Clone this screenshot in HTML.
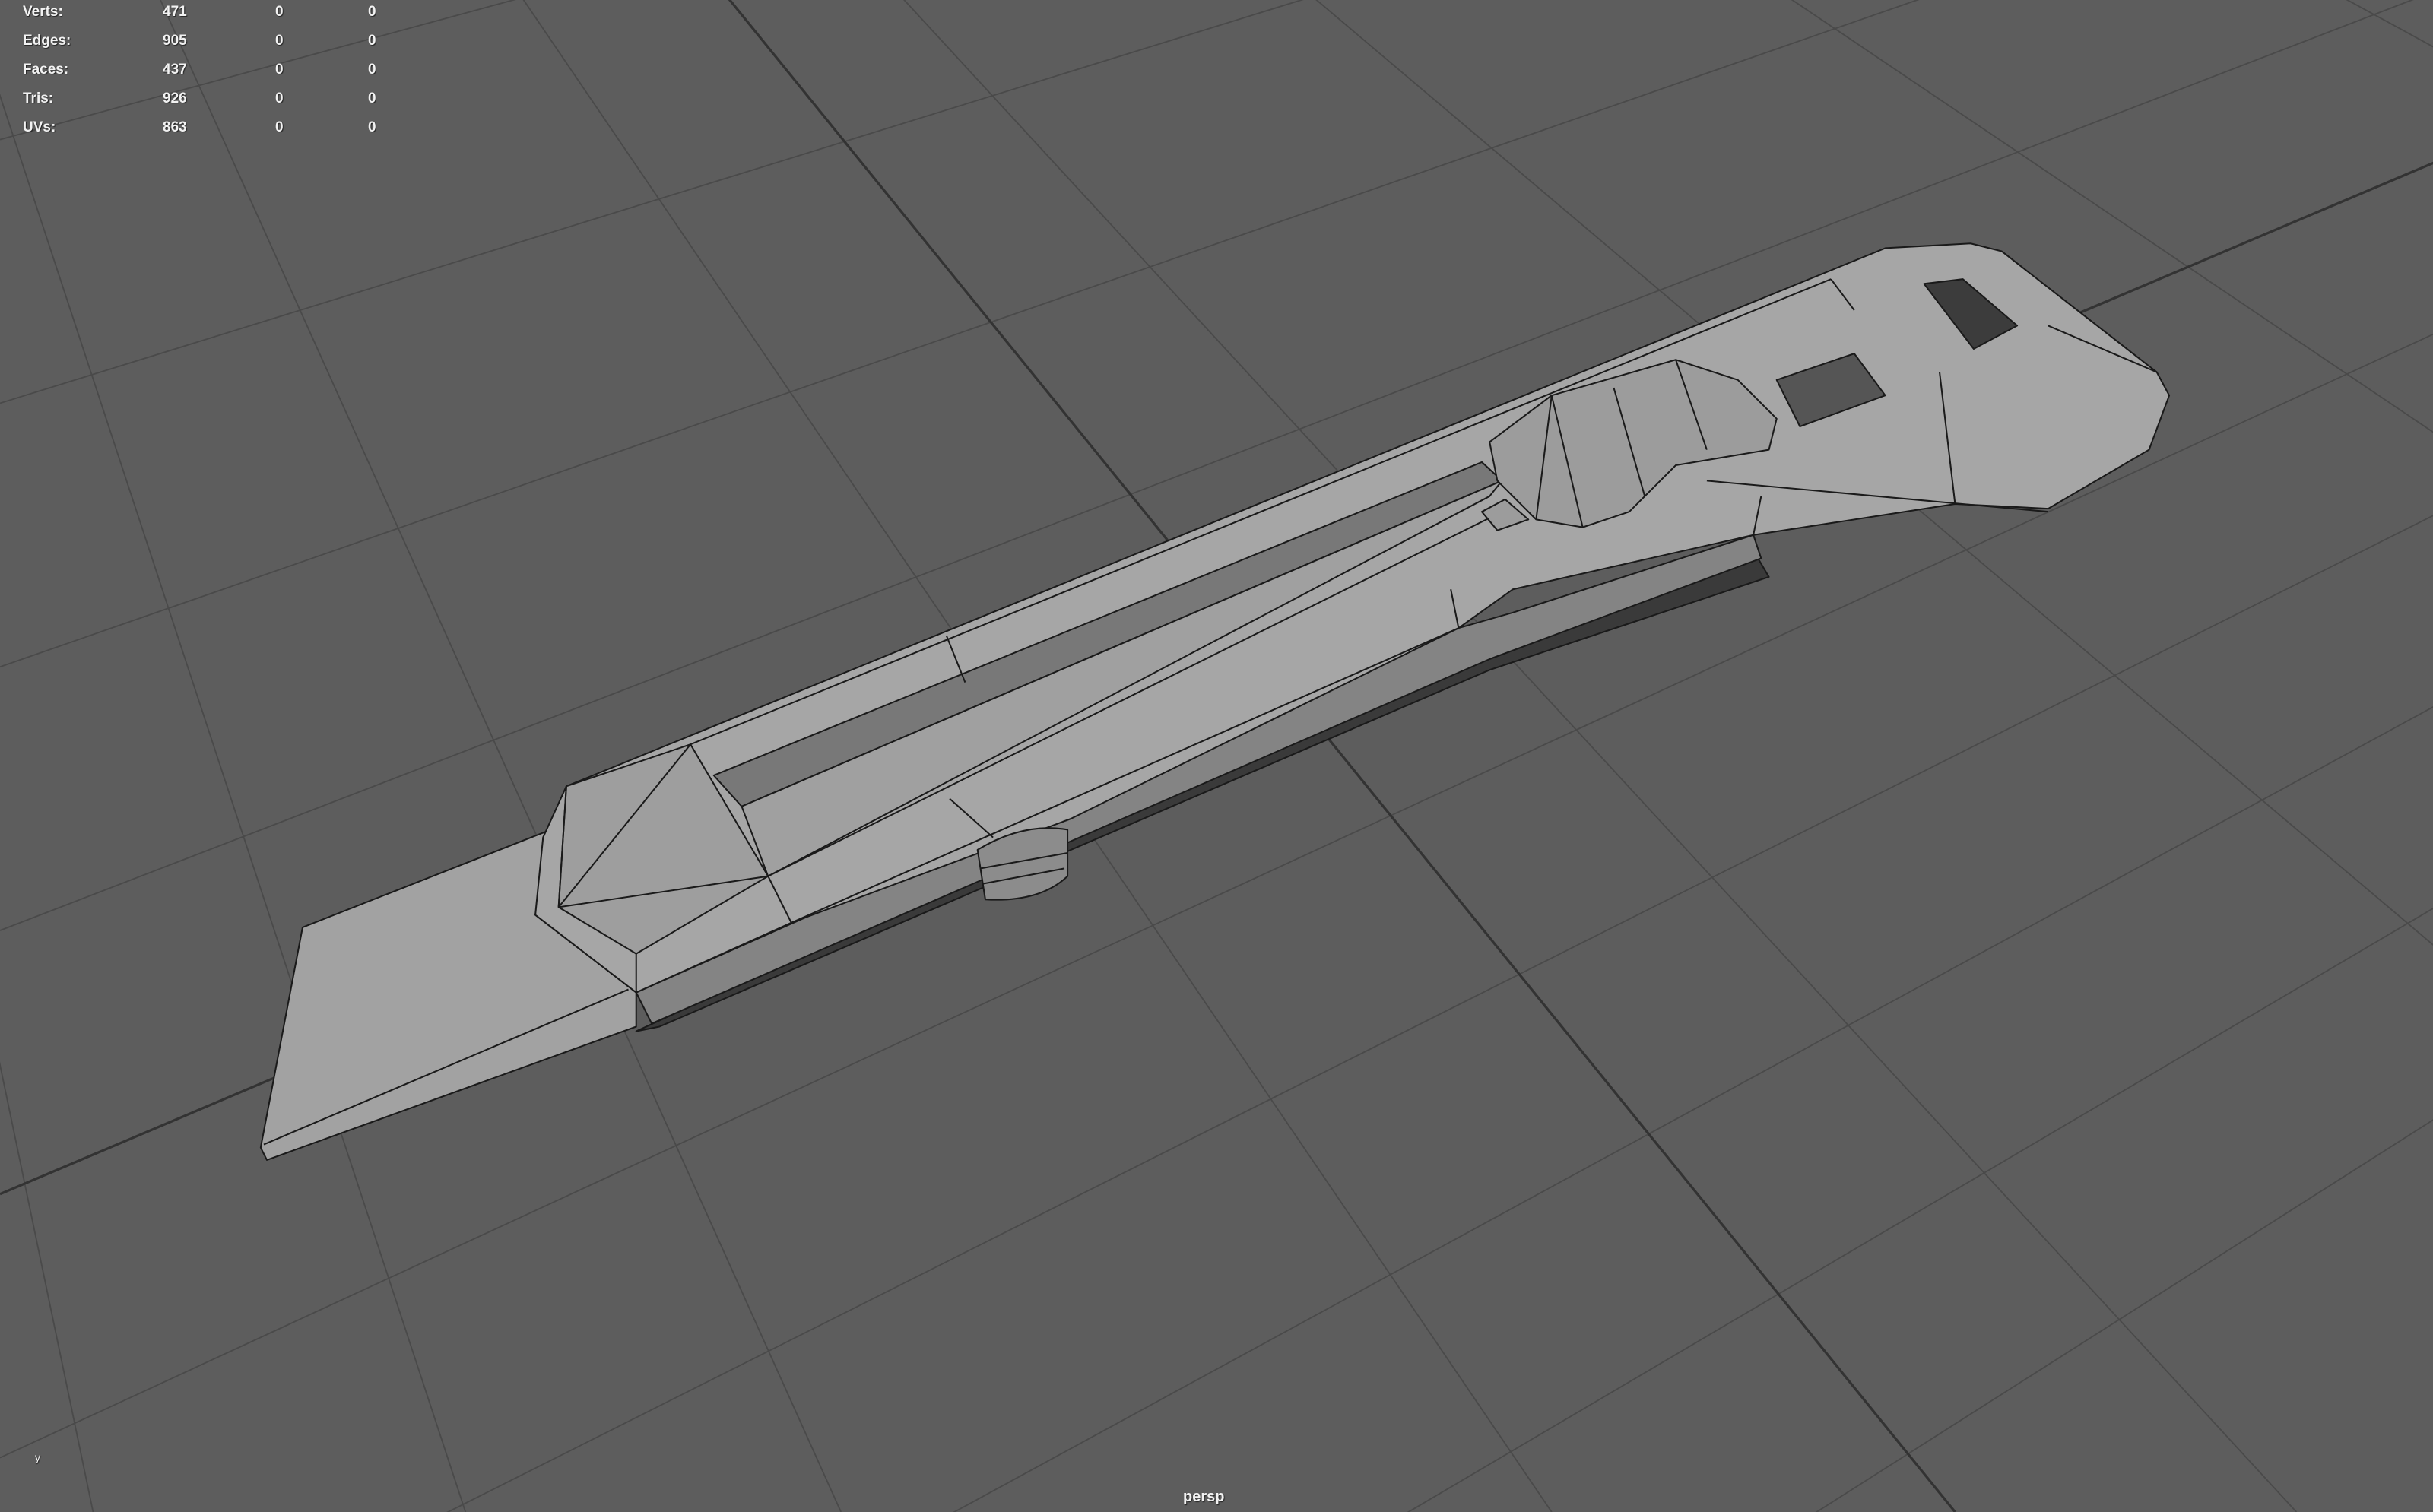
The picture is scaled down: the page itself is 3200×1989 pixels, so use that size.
<!DOCTYPE html>
<html><head><meta charset="utf-8"><style>
html,body{margin:0;padding:0;background:#5d5d5d;width:3200px;height:1989px;overflow:hidden;position:relative}
svg{position:absolute;left:0;top:0;display:block}
.t{position:absolute;font-family:"Liberation Sans",sans-serif;font-weight:bold;font-size:19px;line-height:22px;color:#f2f2f2;text-shadow:1px 1px 1px #222}
</style></head><body>
<svg width="3200" height="1989" viewBox="0 0 1568 975" preserveAspectRatio="none">
<rect width="1568" height="975" fill="#5d5d5d"/>
<g stroke="#4a4a4a" stroke-width="0.9" fill="none">
<line x1="-355" y1="-1019" x2="-200" y2="975"/>
<line x1="-355" y1="-1019" x2="60" y2="975"/>
<line x1="-355" y1="-1019" x2="300" y2="975"/>
<line x1="-355" y1="-1019" x2="542" y2="975"/>
<line x1="-355" y1="-1019" x2="1000" y2="975"/>
<line x1="-355" y1="-1019" x2="1480" y2="975"/>
<line x1="-355" y1="-1019" x2="2000" y2="975"/>
<line x1="-355" y1="-1019" x2="2600" y2="975"/>
<line x1="-355" y1="-1019" x2="3300" y2="975"/>
<line x1="-355" y1="-1019" x2="4200" y2="975"/>
<line x1="4474" y1="-1127" x2="0" y2="-70"/>
<line x1="4474" y1="-1127" x2="0" y2="90"/>
<line x1="4474" y1="-1127" x2="0" y2="260"/>
<line x1="4474" y1="-1127" x2="0" y2="430"/>
<line x1="4474" y1="-1127" x2="0" y2="600"/>
<line x1="4474" y1="-1127" x2="0" y2="940"/>
<line x1="4474" y1="-1127" x2="0" y2="1120"/>
<line x1="4474" y1="-1127" x2="0" y2="1310"/>
<line x1="4474" y1="-1127" x2="0" y2="1510"/>
<line x1="4474" y1="-1127" x2="0" y2="1720"/>
</g>
<g stroke="#333" stroke-width="1.6" fill="none">
<line x1="-355" y1="-1019" x2="1260" y2="975"/>
<line x1="4474" y1="-1127" x2="0" y2="770"/>
</g>
<g stroke="#1a1a1a" stroke-width="1" stroke-linejoin="round">
<polygon points="410,665 940,420 1130,355 1140,372 960,432 425,662" fill="#3a3a3a"/>
<polygon points="410,640 940,405 975,395 1130,345 1135,360 960,425 420,660" fill="#848484"/>
<polygon points="195,598 355,535 345,590 410,640 410,662 172,748 168,740" fill="#a2a2a2"/>
<line x1="170" y1="738" x2="405" y2="638"/>
<polygon points="365,507 1215,160 1270,157 1290,162 1390,240 1398,255 1385,290 1320,328 1260,325 1130,345 975,380 940,405 690,528 510,595 410,640 345,590 350,540" fill="#a6a6a6"/>
<polygon points="365,507 445,480 495,565 410,615 360,585" fill="#9e9e9e"/>
<line x1="360" y1="585" x2="495" y2="565"/>
<line x1="365" y1="507" x2="360" y2="585"/>
<line x1="445" y1="480" x2="360" y2="585"/>
<line x1="410" y1="615" x2="410" y2="640"/>
<line x1="495" y1="565" x2="510" y2="595"/>
<polygon points="460,500 955,298 968,310 478,520" fill="#787878"/>
<polygon points="478,520 968,310 960,320 495,565" fill="#a0a0a0"/>
<line x1="495" y1="565" x2="968" y2="330"/>
<line x1="445" y1="480" x2="1180" y2="180"/>
<line x1="510" y1="595" x2="940" y2="405"/>
<line x1="610" y1="410" x2="622" y2="440"/>
<line x1="612" y1="515" x2="640" y2="540"/>
<line x1="935" y1="380" x2="940" y2="405"/>
<line x1="1180" y1="180" x2="1195" y2="200"/>
<polygon points="1240,183 1265,180 1300,210 1272,225" fill="#3c3c3c"/>
<polygon points="1145,245 1195,228 1215,255 1160,275" fill="#555"/>
<line x1="1100" y1="310" x2="1320" y2="330"/>
<line x1="1250" y1="240" x2="1260" y2="325"/>
<line x1="1320" y1="210" x2="1390" y2="240"/>
<line x1="1130" y1="345" x2="1135" y2="320"/>
<polygon points="960,285 1000,255 1080,232 1120,245 1145,270 1140,290 1080,300 1050,330 1020,340 990,335 965,310" fill="#9c9c9c"/>
<line x1="1000" y1="255" x2="1020" y2="340"/>
<line x1="1040" y1="250" x2="1060" y2="320"/>
<line x1="1000" y1="255" x2="990" y2="335"/>
<line x1="1080" y1="232" x2="1100" y2="290"/>
<polygon points="955,330 970,322 985,335 965,342" fill="#9c9c9c"/>
<path d="M630,548 Q660,530 688,535 L688,565 Q670,582 635,580 Z" fill="#8c8c8c"/>
<line x1="632" y1="560" x2="688" y2="550"/>
<line x1="633" y1="570" x2="686" y2="560"/>
</g>
</svg>
<div class="t" style="left:30px;top:5px">Verts:</div><div class="t" style="left:214px;top:5px">471</div><div class="t" style="left:362px;top:5px">0</div><div class="t" style="left:484px;top:5px">0</div>
<div class="t" style="left:30px;top:43px">Edges:</div><div class="t" style="left:214px;top:43px">905</div><div class="t" style="left:362px;top:43px">0</div><div class="t" style="left:484px;top:43px">0</div>
<div class="t" style="left:30px;top:81px">Faces:</div><div class="t" style="left:214px;top:81px">437</div><div class="t" style="left:362px;top:81px">0</div><div class="t" style="left:484px;top:81px">0</div>
<div class="t" style="left:30px;top:119px">Tris:</div><div class="t" style="left:214px;top:119px">926</div><div class="t" style="left:362px;top:119px">0</div><div class="t" style="left:484px;top:119px">0</div>
<div class="t" style="left:30px;top:157px">UVs:</div><div class="t" style="left:214px;top:157px">863</div><div class="t" style="left:362px;top:157px">0</div><div class="t" style="left:484px;top:157px">0</div>
<div class="t" style="left:1556px;top:1958px;font-size:20px">persp</div>
<div class="t" style="left:46px;top:1906px;font-size:14px;font-weight:normal">y</div>
</body></html>
